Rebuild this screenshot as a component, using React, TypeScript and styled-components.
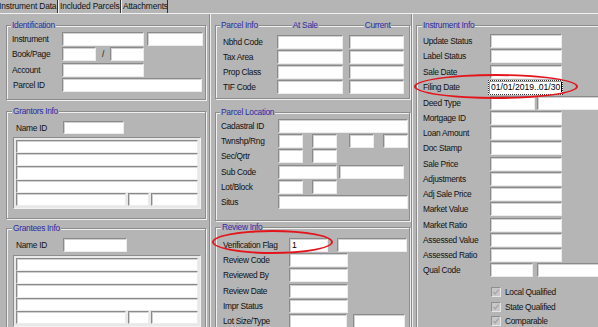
import React from "react";
import styled, { createGlobalStyle } from "styled-components";

const BG = "#b5b5b5";
const FONT = `"Liberation Sans", Arial, sans-serif`;

const Global = createGlobalStyle`
  html, body { margin: 0; padding: 0; background: ${BG}; }
  body { font-family: ${FONT}; }
`;

const Page = styled.div`
  position: relative;
  width: 598px;
  height: 327px;
  overflow: hidden;
  background: ${BG};
  font-family: ${FONT};
  font-size: 8.4px;
  letter-spacing: -0.3px;
  color: #111;
`;

const TabBar = styled.div`
  display: flex;
  box-sizing: border-box;
  height: 14px;
  border-bottom: 1px solid #f0f0f0;
`;

const Tab = styled.div<{ $w: number; $first?: boolean }>`
  box-sizing: border-box;
  width: ${(p) => p.$w}px;
  height: 13px;
  line-height: 13px;
  font-size: 8.4px;
  letter-spacing: -0.15px;
  white-space: nowrap;
  overflow: hidden;
  padding-left: ${(p) => (p.$first ? 0 : 1)}px;
  text-indent: ${(p) => (p.$first ? -1 : 0)}px;
  border-right: 1px solid #333;
  border-left: ${(p) => (p.$first ? "none" : "1px solid #f0f0f0")};
  color: #111;
`;

const Columns = styled.div`
  display: flex;
  height: 313px;
`;

const Column = styled.div<{ $w?: number; $pl: number; $divider?: boolean }>`
  box-sizing: border-box;
  ${(p) => (p.$w ? `width: ${p.$w}px; flex-shrink: 0;` : "flex: 1;")}
  padding-left: ${(p) => p.$pl}px;
  display: flex;
  flex-direction: column;
  ${(p) =>
    p.$divider
      ? `border-right: 1px solid #8a8a8a; box-shadow: 1px 0 0 #eeeeee;`
      : ""}
`;

const GroupBox = styled.div<{ $w: number; $h: number; $mt: number }>`
  box-sizing: border-box;
  flex-shrink: 0;
  width: ${(p) => p.$w}px;
  height: ${(p) => p.$h}px;
  margin-top: ${(p) => p.$mt}px;
  border: 1px solid #8c8c8c;
  box-shadow: inset 1px 1px 0 #f0f0f0, 1px 1px 0 #f0f0f0;
  display: flex;
  flex-direction: column;
`;

const Head = styled.div`
  display: flex;
  align-items: center;
  height: 11px;
  margin-top: -6px;
  flex-shrink: 0;
`;

const Caption = styled.span<{ $ml: number }>`
  margin-left: ${(p) => p.$ml}px;
  padding: 0 1px;
  background: ${BG};
  color: #2c2ca4;
  line-height: 11px;
  white-space: nowrap;
`;

const GroupBody = styled.div<{ $pt: number; $pl: number }>`
  display: flex;
  flex-direction: column;
  padding: ${(p) => p.$pt}px 0 0 ${(p) => p.$pl}px;
`;

const Row = styled.div<{ $h?: number }>`
  display: flex;
  align-items: flex-start;
  height: ${(p) => p.$h ?? 15.25}px;
  flex-shrink: 0;
`;

const Label = styled.span<{ $w: number; $ml?: number }>`
  width: ${(p) => p.$w}px;
  margin-left: ${(p) => p.$ml ?? 0}px;
  flex-shrink: 0;
  line-height: 14px;
  white-space: nowrap;
`;

const Slash = styled.span`
  width: 14px;
  flex-shrink: 0;
  text-align: center;
  line-height: 14px;
`;

const Field = styled.div<{ $w: number; $ml?: number; $h?: number; $focus?: boolean }>`
  box-sizing: border-box;
  flex-shrink: 0;
  width: ${(p) => p.$w}px;
  height: ${(p) => p.$h ?? 14}px;
  margin-left: ${(p) => p.$ml ?? 0}px;
  background: #ffffff;
  border: 1px solid;
  border-color: #8a8a8a #ececec #ececec #8a8a8a;
  box-shadow: inset 1px 1px 0 #d2d2d2;
  display: flex;
  align-items: center;
  overflow: hidden;
  ${(p) =>
    p.$focus
      ? `border: 1px dotted #333; box-shadow: inset 1px 1px 0 #9a9a9a;`
      : ""}
`;

const FieldText = styled.span`
  padding-left: 2px;
  font-size: 8.6px;
  letter-spacing: 0;
  color: #000;
  white-space: nowrap;
  line-height: 12px;
`;

const Caret = styled.span`
  display: inline-block;
  width: 1px;
  height: 10px;
  margin-left: 1px;
  background: #000;
  flex-shrink: 0;
`;

const ListBox = styled.div<{ $mt: number; $ml: number; $w: number }>`
  box-sizing: border-box;
  flex-shrink: 0;
  width: ${(p) => p.$w}px;
  height: 72px;
  margin: ${(p) => p.$mt}px 0 0 ${(p) => p.$ml}px;
  border: 1px solid;
  border-color: #8c8c8c #f2f2f2 #f2f2f2 #8c8c8c;
  background: #e8e8e8;
  padding: 2px;
  display: flex;
  flex-direction: column;
`;

const ListRow = styled.div`
  display: flex;
  height: 13.2px;
  flex-shrink: 0;
`;

const CheckRow = styled.div<{ $mt?: number }>`
  display: flex;
  align-items: center;
  height: 14.7px;
  margin-top: ${(p) => p.$mt ?? 0}px;
  padding-left: 68px;
  flex-shrink: 0;
`;

const CheckBox = styled.span`
  box-sizing: border-box;
  width: 10px;
  height: 10px;
  border: 1px solid;
  border-color: #8e8e8e #e6e6e6 #e6e6e6 #8e8e8e;
  background: #c8c8c8;
  display: inline-flex;
  align-items: center;
  justify-content: center;
  flex-shrink: 0;
`;

const CheckLabel = styled.span`
  margin-left: 4px;
  line-height: 10px;
  white-space: nowrap;
`;

const Ellipse = styled.div<{ $x: number; $y: number; $w: number; $h: number }>`
  position: absolute;
  left: ${(p) => p.$x}px;
  top: ${(p) => p.$y}px;
  width: ${(p) => p.$w}px;
  height: ${(p) => p.$h}px;
  box-sizing: border-box;
  border: 2px solid #e3141c;
  border-radius: 50%;
  pointer-events: none;
`;

const Check = () => (
  <svg width="8" height="8" viewBox="0 0 8 8">
    <polyline points="1.5,4 3.2,6 6.6,1.6" fill="none" stroke="#a6a6a6" strokeWidth="1.4" />
  </svg>
);

const NameList = () => (
  <ListBox $mt={3} $ml={6} $w={188}>
    <ListRow><Field $w={182} $h={13.2} /></ListRow>
    <ListRow><Field $w={182} $h={13.2} /></ListRow>
    <ListRow><Field $w={182} $h={13.2} /></ListRow>
    <ListRow><Field $w={182} $h={13.2} /></ListRow>
    <ListRow>
      <Field $w={110} $h={13.2} />
      <Field $w={21} $ml={2} $h={13.2} />
      <Field $w={47} $ml={2} $h={13.2} />
    </ListRow>
  </ListBox>
);

export default function App() {
  return (
    <Page>
      <Global />
      <TabBar>
        <Tab $w={58} $first>Instrument Data</Tab>
        <Tab $w={63}>Included Parcels</Tab>
        <Tab $w={47}>Attachments</Tab>
      </TabBar>
      <Columns>
        <Column $w={210} $pl={6} $divider>
          <GroupBox $w={200} $h={75} $mt={11}>
            <Head><Caption $ml={4}>Identification</Caption></Head>
            <GroupBody $pt={1} $pl={5}>
              <Row $h={15.3}>
                <Label $w={50}>Instrument</Label>
                <Field $w={82} />
                <Field $w={56} $ml={3} />
              </Row>
              <Row $h={15.3}>
                <Label $w={50}>Book/Page</Label>
                <Field $w={34} />
                <Slash>/</Slash>
                <Field $w={34} />
              </Row>
              <Row $h={15.3}>
                <Label $w={50}>Account</Label>
                <Field $w={82} />
              </Row>
              <Row $h={15.3}>
                <Label $w={49} $ml={1}>Parcel ID</Label>
                <Field $w={140} />
              </Row>
            </GroupBody>
          </GroupBox>

          <GroupBox $w={200} $h={108} $mt={11}>
            <Head><Caption $ml={5}>Grantors Info</Caption></Head>
            <GroupBody $pt={4} $pl={0}>
              <Row $h={13}>
                <Label $w={47} $ml={9}>Name ID</Label>
                <Field $w={61} $h={13} />
              </Row>
              <NameList />
            </GroupBody>
          </GroupBox>

          <GroupBox $w={200} $h={110} $mt={9}>
            <Head><Caption $ml={5}>Grantees Info</Caption></Head>
            <GroupBody $pt={4} $pl={0}>
              <Row $h={14}>
                <Label $w={47} $ml={9}>Name ID</Label>
                <Field $w={64} />
              </Row>
              <NameList />
            </GroupBody>
          </GroupBox>
        </Column>

        <Column $w={202} $pl={5} $divider>
          <GroupBox $w={195} $h={74} $mt={11}>
            <Head>
              <Caption $ml={4}>Parcel Info</Caption>
              <Caption $ml={33}>At Sale</Caption>
              <Caption $ml={45}>Current</Caption>
            </Head>
            <GroupBody $pt={4} $pl={7}>
              <Row $h={15}>
                <Label $w={54}>Nbhd Code</Label>
                <Field $w={66} />
                <Field $w={55} $ml={6} />
              </Row>
              <Row $h={15}>
                <Label $w={54}>Tax Area</Label>
                <Field $w={66} />
                <Field $w={55} $ml={6} />
              </Row>
              <Row $h={15}>
                <Label $w={54}>Prop Class</Label>
                <Field $w={66} />
                <Field $w={55} $ml={6} />
              </Row>
              <Row $h={15}>
                <Label $w={54}>TIF Code</Label>
                <Field $w={66} />
                <Field $w={55} $ml={6} />
              </Row>
            </GroupBody>
          </GroupBox>

          <GroupBox $w={195} $h={109} $mt={13}>
            <Head><Caption $ml={4}>Parcel Location</Caption></Head>
            <GroupBody $pt={1} $pl={5}>
              <Row $h={15.2}>
                <Label $w={57}>Cadastral ID</Label>
                <Field $w={130} />
              </Row>
              <Row $h={15.2}>
                <Label $w={57}>Twnshp/Rng</Label>
                <Field $w={25} />
                <Field $w={25} $ml={9} />
                <Field $w={25} $ml={12} />
                <Field $w={25} $ml={9} />
              </Row>
              <Row $h={15.2}>
                <Label $w={57}>Sec/Qrtr</Label>
                <Field $w={25} />
                <Field $w={25} $ml={9} />
              </Row>
              <Row $h={15.2}>
                <Label $w={57}>Sub Code</Label>
                <Field $w={59} />
                <Field $w={65} $ml={2} />
              </Row>
              <Row $h={15.2}>
                <Label $w={57}>Lot/Block</Label>
                <Field $w={25} />
                <Field $w={25} $ml={9} />
              </Row>
              <Row $h={15.2}>
                <Label $w={57}>Situs</Label>
                <Field $w={130} />
              </Row>
            </GroupBody>
          </GroupBox>

          <GroupBox $w={195} $h={110} $mt={6}>
            <Head><Caption $ml={5}>Review Info</Caption></Head>
            <GroupBody $pt={5} $pl={7}>
              <Row $h={15.2}>
                <Label $w={66}>Verification Flag</Label>
                <Field $w={39}><FieldText>1</FieldText></Field>
                <Field $w={70} $ml={9} />
              </Row>
              <Row $h={15.2}>
                <Label $w={66}>Review Code</Label>
                <Field $w={59} />
              </Row>
              <Row $h={15.2}>
                <Label $w={66}>Reviewed By</Label>
                <Field $w={59} />
              </Row>
              <Row $h={15.2}>
                <Label $w={66}>Review Date</Label>
                <Field $w={59} />
              </Row>
              <Row $h={15.2}>
                <Label $w={66}>Impr Status</Label>
                <Field $w={59} />
              </Row>
              <Row $h={15.2}>
                <Label $w={66}>Lot Size/Type</Label>
                <Field $w={58} />
                <Field $w={52} $ml={6} />
              </Row>
            </GroupBody>
          </GroupBox>
        </Column>

        <Column $pl={4}>
          <GroupBox $w={200} $h={320} $mt={11}>
            <Head><Caption $ml={5}>Instrument Info</Caption></Head>
            <GroupBody $pt={3} $pl={6}>
              <Row><Label $w={67}>Update Status</Label><Field $w={72} /></Row>
              <Row><Label $w={67}>Label Status</Label><Field $w={72} /></Row>
              <Row><Label $w={67}>Sale Date</Label><Field $w={72} /></Row>
              <Row $h={16.5}>
                <Label $w={67}>Filing Date</Label>
                <Field $w={75} $ml={-2} $h={15} $focus>
                  <FieldText>01/01/2019..01/30</FieldText>
                  <Caret />
                </Field>
              </Row>
              <Row $h={14.5}>
                <Label $w={67}>Deed Type</Label>
                <Field $w={45} />
                <Field $w={80} $ml={2} />
              </Row>
              <Row><Label $w={67}>Mortgage ID</Label><Field $w={72} /></Row>
              <Row><Label $w={67}>Loan Amount</Label><Field $w={72} /></Row>
              <Row><Label $w={67}>Doc Stamp</Label><Field $w={72} /></Row>
              <Row><Label $w={67}>Sale Price</Label><Field $w={72} /></Row>
              <Row><Label $w={67}>Adjustments</Label><Field $w={72} /></Row>
              <Row><Label $w={67}>Adj Sale Price</Label><Field $w={72} /></Row>
              <Row><Label $w={67}>Market Value</Label><Field $w={72} /></Row>
              <Row><Label $w={67}>Market Ratio</Label><Field $w={72} /></Row>
              <Row><Label $w={67}>Assessed Value</Label><Field $w={72} /></Row>
              <Row><Label $w={67}>Assessed Ratio</Label><Field $w={72} /></Row>
              <Row>
                <Label $w={67}>Qual Code</Label>
                <Field $w={43} />
                <Field $w={80} $ml={4} />
              </Row>
              <CheckRow $mt={6}>
                <CheckBox><Check /></CheckBox>
                <CheckLabel>Local Qualified</CheckLabel>
              </CheckRow>
              <CheckRow>
                <CheckBox><Check /></CheckBox>
                <CheckLabel>State Qualified</CheckLabel>
              </CheckRow>
              <CheckRow>
                <CheckBox><Check /></CheckBox>
                <CheckLabel>Comparable</CheckLabel>
              </CheckRow>
            </GroupBody>
          </GroupBox>
        </Column>
      </Columns>

      <Ellipse $x={414} $y={74} $w={164} $h={25} />
      <Ellipse $x={212} $y={230} $w={121} $h={24} />
    </Page>
  );
}
